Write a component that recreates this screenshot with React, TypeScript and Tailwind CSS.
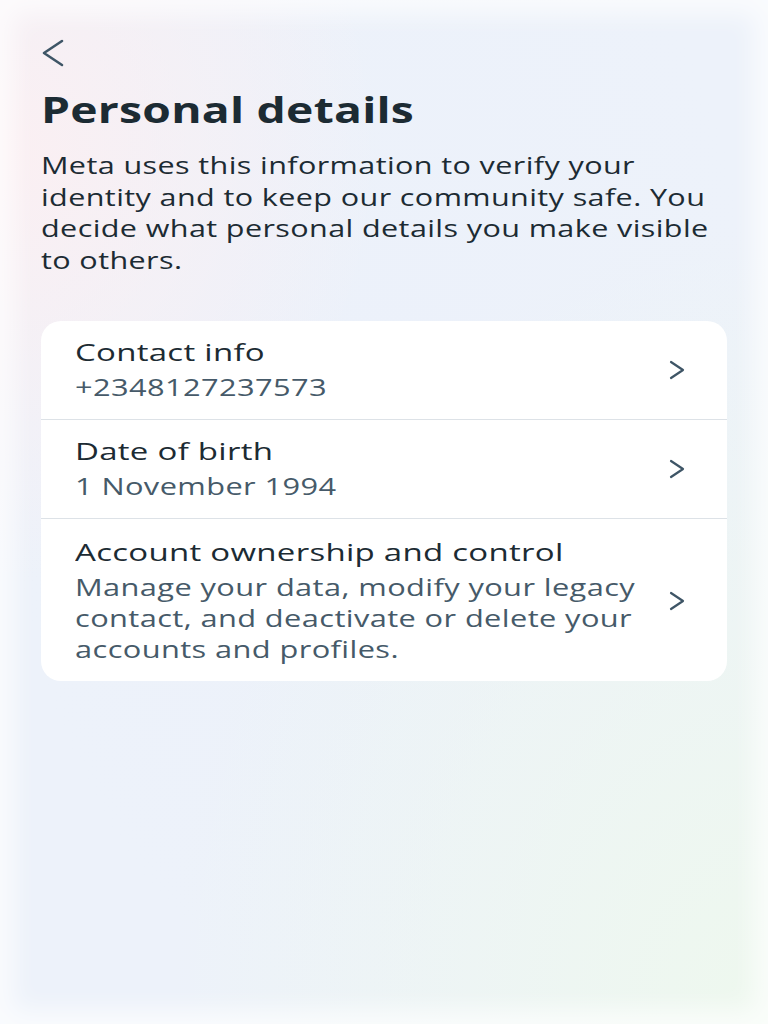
const rows = [
  { title: 'Contact info', sub: ['+2348127237573'] },
  { title: 'Date of birth', sub: ['1 November 1994'] },
  {
    title: 'Account ownership and control',
    sub: ['Manage your data, modify your legacy', 'contact, and deactivate or delete your', 'accounts and profiles.'],
  },
]

function BackIcon() {
  return (
    <svg width="26" height="30" viewBox="0 0 26 30" fill="none" stroke="#3e5566" strokeWidth="2.6" strokeLinecap="round" strokeLinejoin="round">
      <polyline points="21,3 3,15 21,27" />
    </svg>
  )
}

function RowChevron() {
  return (
    <svg width="18" height="20" viewBox="0 0 18 20" fill="none" stroke="#3e5566" strokeWidth="2.2" strokeLinecap="round" strokeLinejoin="round">
      <polyline points="3,2 15,10 3,18" />
    </svg>
  )
}

export default function App() {
  return (
    <div
      className="relative h-[1024px] w-[768px] overflow-hidden bg-[#edf2fa] text-[#1c2b33]"
      style={{ fontFamily: '"Open Sans", "Noto Sans", Roboto, sans-serif' }}
    >
      {/* soft background tint */}
      <div className="pointer-events-none absolute inset-0 bg-[radial-gradient(ellipse_at_0%_15%,#fbeff2_0%,transparent_35%),radial-gradient(ellipse_at_100%_100%,#eef8ee_0%,transparent_55%),radial-gradient(ellipse_at_50%_40%,#ecf1fa_0%,transparent_70%)]" />
      <div className="pointer-events-none absolute inset-0 shadow-[inset_0_0_24px_14px_rgba(255,255,255,0.7)]" />

      <div className="relative px-[41px] pt-[38px]">
        <button className="flex h-[30px] w-[26px] items-center justify-center">
          <BackIcon />
        </button>

        <h1 className="mt-[20px] origin-left scale-x-[1.32] text-[35px] font-bold leading-[44px] tracking-[0.2px]">
          Personal details
        </h1>

        <p className="mt-[18px] origin-left scale-x-[1.3] text-[23.5px] leading-[31.5px] tracking-[0.3px]">
          Meta uses this information to verify your
          <br />
          identity and to keep our community safe. You
          <br />
          decide what personal details you make visible
          <br />
          to others.
        </p>

        <div className="mt-[45px] overflow-hidden rounded-[20px] bg-white">
          {rows.map((r, i) => (
            <div
              key={r.title}
              className={`flex items-center pl-[34px] pr-[41px] ${i > 0 ? 'border-t-[1.5px] border-[#dde2e7]' : ''} ${
                i === 2 ? 'pb-[16px] pt-[17px]' : 'pb-[16px] pt-[15px]'
              }`}
            >
              <div className="flex-1">
                <div className="origin-left scale-x-[1.375] text-[24px] font-medium leading-[32px] tracking-[0.2px]">
                  {r.title}
                </div>
                <div className="mt-[4px] origin-left scale-x-[1.31] text-[23.5px] leading-[31px] tracking-[0.3px] text-[#465a69]">
                  {r.sub.map((s, j) => (
                    <div key={j}>{s}</div>
                  ))}
                </div>
              </div>
              <RowChevron />
            </div>
          ))}
        </div>
      </div>
    </div>
  )
}
